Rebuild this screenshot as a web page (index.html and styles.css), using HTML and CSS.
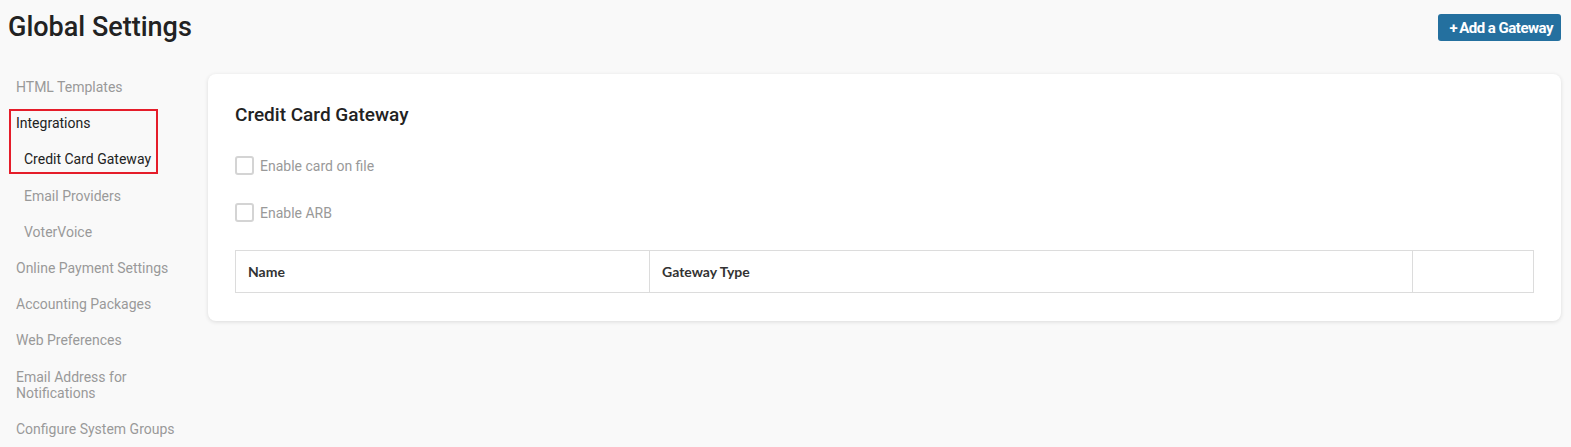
FILE: index.html
```html
<!DOCTYPE html>
<html lang="en">
<head>
    <meta charset="UTF-8">
    <meta name="viewport" content="width=device-width, initial-scale=1.0">
    <title>Global Settings</title>
    <link rel="stylesheet" href="styles.css">
</head>
<body>
    <div class="header">
        <h1>Global Settings</h1>
        <button class="add-btn"><span class="plus">+</span>Add a Gateway</button>
    </div>
    <div class="main">
        <ul class="sidebar">
            <li class="item">HTML Templates</li>
            <li class="group">
                <div class="item active">Integrations</div>
                <div class="item sub active">Credit Card Gateway</div>
            </li>
            <li class="item sub">Email Providers</li>
            <li class="item sub">VoterVoice</li>
            <li class="item">Online Payment Settings</li>
            <li class="item">Accounting Packages</li>
            <li class="item">Web Preferences</li>
            <li class="item">Email Address for Notifications</li>
            <li class="item">Configure System Groups</li>
        </ul>
        <div class="card">
            <h2>Credit Card Gateway</h2>
            <label class="check"><span class="box"></span>Enable card on file</label>
            <label class="check"><span class="box"></span>Enable ARB</label>
            <table class="gateways">
                <thead>
                    <tr>
                        <th class="col-name">Name</th>
                        <th>Gateway Type</th>
                        <th class="col-actions"></th>
                    </tr>
                </thead>
            </table>
        </div>
    </div>
</body>
</html>
```

FILE: styles.css
```css
*{
    margin: 0;
    padding: 0;
    box-sizing: border-box;
}
body{
    background-color: #f9f9f9;
    font-family: Roboto, "Liberation Sans", sans-serif;
    color: #222;
}
.header{
    display: flex;
    justify-content: space-between;
    align-items: flex-start;
    padding: 10px 10px 0 8px;
}
h1{
    font-size: 27px;
    font-weight: 500;
    line-height: 34px;
    color: #222;
}
.add-btn{
    margin-top: 4px;
    height: 27px;
    padding: 0 8px 0 11px;
    border: none;
    border-radius: 3px;
    background-color: #24709f;
    color: #fff;
    font-family: Roboto, "Liberation Sans", sans-serif;
    font-size: 15px;
    font-weight: 700;
    letter-spacing: -0.5px;
}
.plus{
    margin-right: 2px;
}
.main{
    display: flex;
    align-items: flex-start;
    padding: 0 10px 0 8px;
    margin-top: 24px;
}
.sidebar{
    list-style: none;
    width: 200px;
    flex-shrink: 0;
    padding-right: 16px;
    margin-top: 1px;
}
.item{
    font-size: 14px;
    line-height: 16.2px;
    padding: 10px 0 10px 8px;
    color: #999;
}
.item.sub{
    padding-left: 16px;
}
.item.active{
    color: #222;
}
.group{
    position: relative;
    width: fit-content;
    padding-right: 7px;
}
.group::after{
    content: "";
    position: absolute;
    top: 4px;
    bottom: 4px;
    left: 1px;
    right: 0;
    border: 2px solid #e51d2a;
}
.card{
    flex: 1;
    margin-top: 6px;
    background-color: #fff;
    border-radius: 8px;
    box-shadow: 0 1px 4px rgba(0, 0, 0, 0.12);
    padding: 30px 27px 28px 27px;
}
h2{
    font-size: 19px;
    font-weight: 500;
    line-height: 22px;
    margin-bottom: 30px;
}
.check{
    display: flex;
    align-items: center;
    height: 19px;
    margin-bottom: 28px;
    font-size: 14px;
    color: #999;
}
.box{
    width: 19px;
    height: 19px;
    border: 2px solid #d4d4d4;
    border-radius: 3px;
    margin-right: 6px;
}
.gateways{
    width: 100%;
    border-collapse: collapse;
    font-family: Lato, "Open Sans", sans-serif;
}
.gateways th{
    border: 1px solid #dcdcdc;
    height: 42px;
    text-align: left;
    padding: 0 12px;
    font-size: 14px;
    font-weight: 700;
    color: #333;
}
.col-name{
    width: 414px;
}
.col-actions{
    width: 121px;
}
```
